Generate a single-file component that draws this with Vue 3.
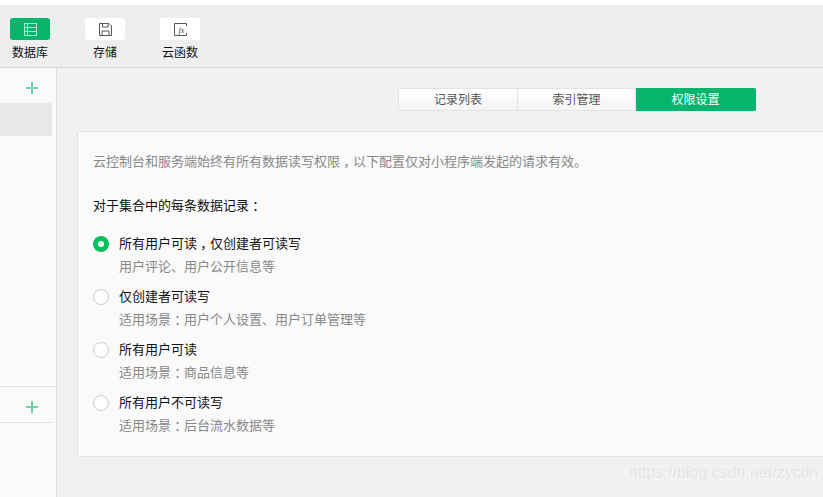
<template>
  <div class="app">
    <header class="toolbar">
      <div v-for="tool in tools" :key="tool.name" class="tool">
        <div class="tool-btn" :class="{ active: tool.active }">
          <svg v-if="tool.icon === 'db'" width="13" height="13" viewBox="0 0 13 13" fill="none" stroke="#fff" stroke-opacity="0.7">
            <rect x="0.5" y="0.5" width="12" height="12" />
            <path d="M0.5 4.500h12M0.500 8.500h12M3.500 0.500v12" />
          </svg>
          <svg v-else-if="tool.icon === 'save'" width="13" height="13" viewBox="0 0 13 13" fill="none" stroke="#555">
            <path d="M0.500 0.500h9.500l2.500 2.500v9.500h-12z" />
            <path d="M3.500 0.500v3.500h5.500v-3.500M3 12.500v-4.500h7v4.500" />
          </svg>
          <svg v-else width="13" height="13" viewBox="0 0 13 13" fill="none" stroke="#555">
            <path d="M12.500 3v-2.500h-12v12h12v-2.500" />
            <text x="4.500" y="9.500" class="fx">fx</text>
          </svg>
        </div>
        <span class="tool-name">{{ tool.name }}</span>
      </div>
    </header>

    <div class="body">
      <aside class="sidebar">
        <div class="side-head">
          <span class="plus"></span>
        </div>
        <div class="side-item"></div>
        <div class="side-spacer"></div>
        <div class="side-foot">
          <span class="plus"></span>
        </div>
      </aside>

      <main class="main">
        <div class="tabs">
          <div v-for="tab in tabs" :key="tab" class="tab" :class="{ current: tab === currentTab }">{{ tab }}</div>
        </div>

        <section class="panel">
          <p class="notice">
            <template v-for="part in splitPunct(notice)" :key="part.key">
              <span v-if="part.punct" class="punct">{{ part.text }}</span>
              <template v-else>{{ part.text }}</template>
            </template>
          </p>
          <p class="question">
            <template v-for="part in splitPunct(question)" :key="part.key">
              <span v-if="part.punct" class="punct">{{ part.text }}</span>
              <template v-else>{{ part.text }}</template>
            </template>
          </p>
          <div v-for="opt in options" :key="opt.label" class="option">
            <span class="radio" :class="{ checked: opt.checked }"></span>
            <div class="option-text">
              <div class="option-label">
                <template v-for="part in splitPunct(opt.label)" :key="part.key">
                  <span v-if="part.punct" class="punct">{{ part.text }}</span>
                  <template v-else>{{ part.text }}</template>
                </template>
              </div>
              <div class="option-desc">
                <template v-for="part in splitPunct(opt.desc)" :key="part.key">
                  <span v-if="part.punct" class="punct">{{ part.text }}</span>
                  <template v-else>{{ part.text }}</template>
                </template>
              </div>
            </div>
          </div>
        </section>
        <div class="watermark">https://blog.csdn.net/zycdn</div>
      </main>
    </div>
  </div>
</template>

<script setup>
const tools = [
  { name: '数据库', icon: 'db', active: true },
  { name: '存储', icon: 'save' },
  { name: '云函数', icon: 'fn' }
]

const tabs = ['记录列表', '索引管理', '权限设置']
const currentTab = '权限设置'

const notice = '云控制台和服务端始终有所有数据读写权限，以下配置仅对小程序端发起的请求有效。'
const question = '对于集合中的每条数据记录：'

const options = [
  { label: '所有用户可读，仅创建者可读写', desc: '用户评论、用户公开信息等', checked: true },
  { label: '仅创建者可读写', desc: '适用场景：用户个人设置、用户订单管理等' },
  { label: '所有用户可读', desc: '适用场景：商品信息等' },
  { label: '所有用户不可读写', desc: '适用场景：后台流水数据等' }
]

// the comma and colon sit centred in their cell
const splitPunct = (text) =>
  text.split(/([，：])/).map((part, i) => ({ key: i, text: part, punct: i % 2 === 1 }))
</script>

<style>
html, body {
  margin: 0;
  background: #fff;
  overflow: hidden;
}
</style>

<style scoped>
.app {
  width: 823px;
  height: 497px;
  padding-top: 5px;
  box-sizing: border-box;
  display: flex;
  flex-direction: column;
  overflow: hidden;
  font-family: "Liberation Sans", "Noto Sans CJK SC", sans-serif;
  font-size: 12px;
  color: #111;
}
.toolbar {
  height: 63px;
  flex: none;
  box-sizing: border-box;
  background: #eee;
  border-bottom: 1px solid #d9d9d9;
  display: flex;
  gap: 35px;
  padding: 13px 0 0 10px;
}
.tool {
  width: 40px;
  display: flex;
  flex-direction: column;
  align-items: center;
}
.tool-btn {
  width: 40px;
  height: 22px;
  border-radius: 3px;
  background: #fff;
  display: flex;
  align-items: center;
  justify-content: center;
}
.tool-btn.active {
  background: #07b46b;
}
.fx {
  font-family: "Liberation Serif", serif;
  font-style: italic;
  font-size: 8px;
  fill: #444;
  stroke: none;
}
.tool-name {
  margin-top: 5px;
  line-height: 16px;
  white-space: nowrap;
}
.body {
  flex: 1;
  display: flex;
  min-height: 0;
}
.sidebar {
  width: 57px;
  flex: none;
  box-sizing: border-box;
  background: #fafafa;
  border-right: 1px solid #ddd;
  display: flex;
  flex-direction: column;
}
.side-head {
  height: 35px;
  display: flex;
  align-items: center;
  justify-content: flex-end;
  padding: 4px 18px 0 0;
  box-sizing: border-box;
}
.side-item {
  width: 52px;
  height: 33px;
  background: #e8e8e8;
  border-radius: 0 2px 2px 0;
}
.side-spacer {
  height: 250px;
  border-bottom: 1px solid #e2e2e2;
}
.side-foot {
  width: 52px;
  height: 36px;
  box-sizing: border-box;
  border-bottom: 1px solid #e2e2e2;
  display: flex;
  align-items: center;
  justify-content: flex-end;
  padding: 5px 14px 0 0;
}
.plus {
  width: 12px;
  height: 12px;
  display: block;
  background:
    linear-gradient(#6fd3a6, #6fd3a6) center / 12px 2px no-repeat,
    linear-gradient(#6fd3a6, #6fd3a6) center / 2px 12px no-repeat;
}
.main {
  flex: 1;
  position: relative;
  background: #f1f1f1;
  padding: 20px 0 0 20px;
  min-width: 0;
}
.tabs {
  display: flex;
  margin-left: 321px;
  width: 358px;
  height: 23px;
}
.tab {
  width: 118px;
  flex: none;
  box-sizing: border-box;
  border: 1px solid #e2e2e2;
  border-left-width: 0;
  background: linear-gradient(#fff, #f4f4f4);
  color: #555;
  text-align: center;
  line-height: 23px;
}
.tab:first-child {
  width: 120px;
  border-left-width: 1px;
  border-radius: 2px 0 0 2px;
}
.tab.current {
  width: 120px;
  background: #07b46b;
  border-color: #07b46b;
  color: #fff;
  border-radius: 0 2px 2px 0;
}
.panel {
  margin-top: 20px;
  width: 760px;
  height: 326px;
  box-sizing: border-box;
  background: #fafafa;
  border: 1px solid #e2e2e2;
  border-radius: 2px;
  padding: 21px 0 0 15px;
  font-size: 13px;
}
.punct {
  display: inline-block;
  width: 1em;
  text-align: center;
  font-feature-settings: "halt";
}
.notice {
  margin: 0;
  line-height: 18px;
  color: #888;
}
.question {
  margin: 26px 0 20px;
  line-height: 18px;
}
.option {
  display: flex;
  gap: 10px;
  height: 53px;
}
.radio {
  width: 16px;
  height: 16px;
  box-sizing: border-box;
  border-radius: 50%;
  border: 1px solid #ccc;
  background: #fff;
  flex: none;
  margin-top: 1px;
}
.radio.checked {
  border: 5px solid #07c160;
}
.option-label {
  line-height: 18px;
}
.option-desc {
  margin-top: 5px;
  line-height: 18px;
  color: #888;
}
.watermark {
  position: absolute;
  left: 572px;
  top: 396px;
  font-size: 16px;
  color: rgba(190, 190, 190, 0.3);
  text-shadow: 1px 1px 0 rgba(255, 255, 255, 0.4);
  white-space: nowrap;
}
</style>
